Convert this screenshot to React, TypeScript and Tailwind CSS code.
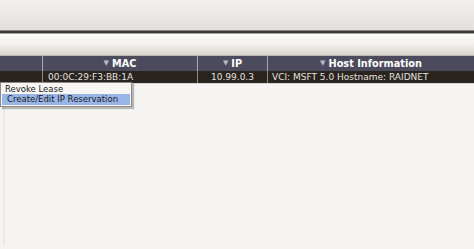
export default function App() {
  const font = { fontFamily: '"DejaVu Sans", Verdana, sans-serif' }
  return (
    <div className="w-[474px] h-[249px] bg-[#f5f4f2] flex flex-col overflow-hidden relative" style={font}>
      {/* top toolbar */}
      <div className="h-[30px] bg-gradient-to-b from-[#f2f1ef] to-[#e3e0dc]" />
      <div className="h-[1px] bg-[#8c8780]" />
      <div className="h-[2px] bg-[#3b3936]" />
      <div className="h-[1px] bg-[#a8a39c]" />
      <div className="h-[1px] bg-[#ffffff]" />
      {/* sub bar */}
      <div className="h-[20px] bg-gradient-to-b from-[#fbfbfa] via-[#f0efed] to-[#d6d2cc]" />

      {/* grid header */}
      <div className="h-[16px] flex bg-[#4c4b5d] border-t border-[#bcb8b2] text-white text-[9.75px] font-bold leading-[15px]">
        <div className="w-[43px] border-r border-[#a9a7b4]" />
        <div className="w-[155px] border-r border-[#a9a7b4] flex justify-center items-center gap-[3px]">
          <span className="text-[#b9b9c4] text-[7px]">▼</span>MAC
        </div>
        <div className="w-[70px] border-r border-[#a9a7b4] flex justify-center items-center gap-[3px]">
          <span className="text-[#b9b9c4] text-[7px]">▼</span>IP
        </div>
        <div className="flex-1 flex justify-center items-center gap-[3px]">
          <span className="text-[#b9b9c4] text-[7px]">▼</span>Host Information
        </div>
      </div>

      {/* data row */}
      <div className="h-[13px] flex bg-[#2a2421] text-[#e4e2de] text-[9px] leading-[13px] border-b border-[#d8d5d0]">
        <div className="w-[43px] border-r border-[#8d8782]" />
        <div className="w-[155px] border-r border-[#8d8782] pl-[5px]">00:0C:29:F3:BB:1A</div>
        <div className="w-[70px] border-r border-[#8d8782] text-center">10.99.0.3</div>
        <div className="flex-1 pl-[4px]">VCI: MSFT 5.0 Hostname: RAIDNET</div>
      </div>

      {/* empty grid body */}
      <div className="flex-1 flex mx-[3px] mb-[4px] border-l-2 border-[#ebe9e6]">
        <div className="flex-1 bg-[#f5f4f2]" />
      </div>

      {/* context menu */}
      <div className="absolute left-0 top-[82px] w-[132px] bg-[#f7f6f4] border border-[#8c8a86] shadow-[2px_2px_1px_rgba(0,0,0,0.25)] text-[8.5px] text-[#1a1a1a] py-[1px]">
        <div className="h-[10px] leading-[10px] pl-[4px]">Revoke Lease</div>
        <div className="h-[11px] leading-[11px] pl-[5px] bg-[#98b5e6] mx-[1px]">Create/Edit IP Reservation</div>
      </div>
    </div>
  )
}
